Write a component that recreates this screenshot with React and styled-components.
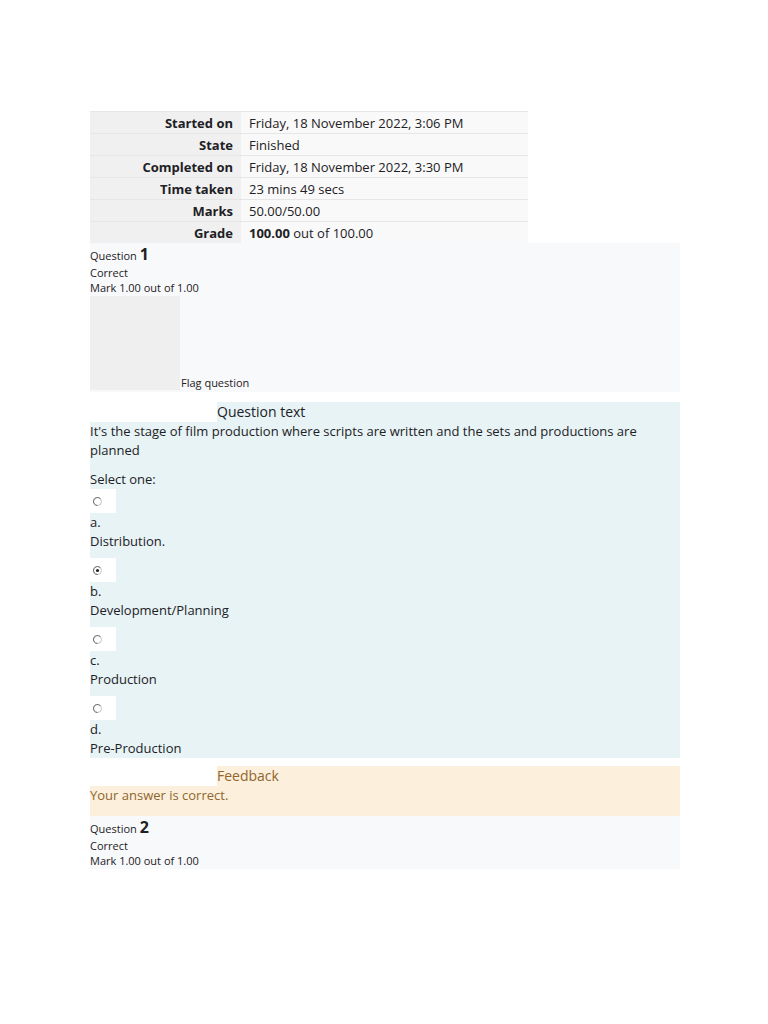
import React from 'react'
import styled, { createGlobalStyle } from 'styled-components'

const Global = createGlobalStyle`
  body {
    margin: 0;
    background: #fff;
    font-family: "Open Sans", "Noto Sans", sans-serif;
    color: #1d2125;
  }
`

const Page = styled.div`
  width: 590px;
  padding: 111px 0 0 90px;
`

const Summary = styled.table`
  width: 438px;
  table-layout: fixed;
  border-collapse: collapse;
  font-size: 13px;
`

const Row = styled.tr`
  border-top: 1px solid #e6e6e6;
`

const Th = styled.th`
  width: 151px;
  height: 21px;
  padding: 0 8px 0 0;
  box-sizing: border-box;
  text-align: right;
  font-weight: 700;
  background: #f0f0f0;
`

const Td = styled.td`
  height: 21px;
  padding: 0 0 0 8px;
  background: #f9f9f9;
`

const Info = styled.div`
  background: #f8f9fa;
  padding: 2px 0 ${p => p.bottom || 0}px;
  font-size: 11px;
  line-height: 15px;
`

const QNo = styled.div`
  font-size: 11px;
  line-height: 19px;
  b {
    font-size: 16px;
    font-weight: 700;
  }
`

const FlagRow = styled.div`
  display: flex;
  align-items: flex-end;
  margin-top: 1px;
`

const FlagBox = styled.div`
  width: 90px;
  height: 94px;
  background: #efefef;
`

const FlagText = styled.span`
  font-size: 11px;
  line-height: 14px;
  margin-left: 1px;
`

const Heading = styled.div`
  margin: ${p => p.top}px 0 0 127px;
  background: ${p => p.bg};
  color: ${p => p.color || '#1d2125'};
  font-size: 14px;
  line-height: 20px;
`

const Panel = styled.div`
  background: ${p => p.bg};
  color: ${p => p.color || '#1d2125'};
  font-size: 13px;
  line-height: 19px;
  padding-bottom: ${p => p.bottom || 0}px;
`

const Para = styled.p`
  margin: 0 0 ${p => p.mb || 0}px;
`

const Option = styled.div`
  & + & {
    margin-top: 7px;
  }
`

const RadioBox = styled.div`
  width: 26px;
  height: 24px;
  background: #fff;
  display: flex;
  align-items: center;
  padding-left: 2px;
  box-sizing: border-box;
`

const Letter = styled.div`
  font-size: 13px;
  line-height: 19px;
`

const Radio = ({ checked }) => (
  <svg width="11" height="11" viewBox="0 0 11 11">
    <circle cx="5.5" cy="5.5" r="4" fill="#fff" stroke="#c4c4c4" strokeWidth="1" />
    <path d="M8.3 2.7 A4 4 0 1 0 5.5 9.5" fill="none" stroke="#6f6f6f" strokeWidth="1" />
    {checked && <circle cx="5.5" cy="5.5" r="1.6" fill="#222" />}
  </svg>
)

const rows = [
  ['Started on', 'Friday, 18 November 2022, 3:06 PM'],
  ['State', 'Finished'],
  ['Completed on', 'Friday, 18 November 2022, 3:30 PM'],
  ['Time taken', '23 mins 49 secs'],
  ['Marks', '50.00/50.00'],
  ['Grade', <><b>100.00</b> out of 100.00</>],
]

const options = [
  ['a.', 'Distribution.', false],
  ['b.', 'Development/Planning', true],
  ['c.', 'Production', false],
  ['d.', 'Pre-Production', false],
]

export default function App () {
  return (
    <Page>
      <Global />
      <Summary>
        <tbody>
          {rows.map(([k, v]) => (
            <Row key={k}>
              <Th>{k}</Th>
              <Td>{v}</Td>
            </Row>
          ))}
        </tbody>
      </Summary>

      <Info bottom={2}>
        <QNo>Question <b>1</b></QNo>
        <div>Correct</div>
        <div>Mark 1.00 out of 1.00</div>
        <FlagRow>
          <FlagBox />
          <FlagText>Flag question</FlagText>
        </FlagRow>
      </Info>

      <Heading top={10} bg="#e7f3f5">Question text</Heading>
      <Panel bg="#e7f3f5">
        <Para mb={10}>It's the stage of film production where scripts are written and the sets and productions are planned</Para>
        <Para>Select one:</Para>
        {options.map(([l, t, c]) => (
          <Option key={l}>
            <RadioBox><Radio checked={c} /></RadioBox>
            <Letter>{l}</Letter>
            <div>{t}</div>
          </Option>
        ))}
      </Panel>

      <Heading top={8} bg="#fcefdc" color="#8e662e">Feedback</Heading>
      <Panel bg="#fcefdc" color="#8e662e" bottom={11}>
        <Para>Your answer is correct.</Para>
      </Panel>

      <Info bottom={1}>
        <QNo>Question <b>2</b></QNo>
        <div>Correct</div>
        <div>Mark 1.00 out of 1.00</div>
      </Info>
    </Page>
  )
}
